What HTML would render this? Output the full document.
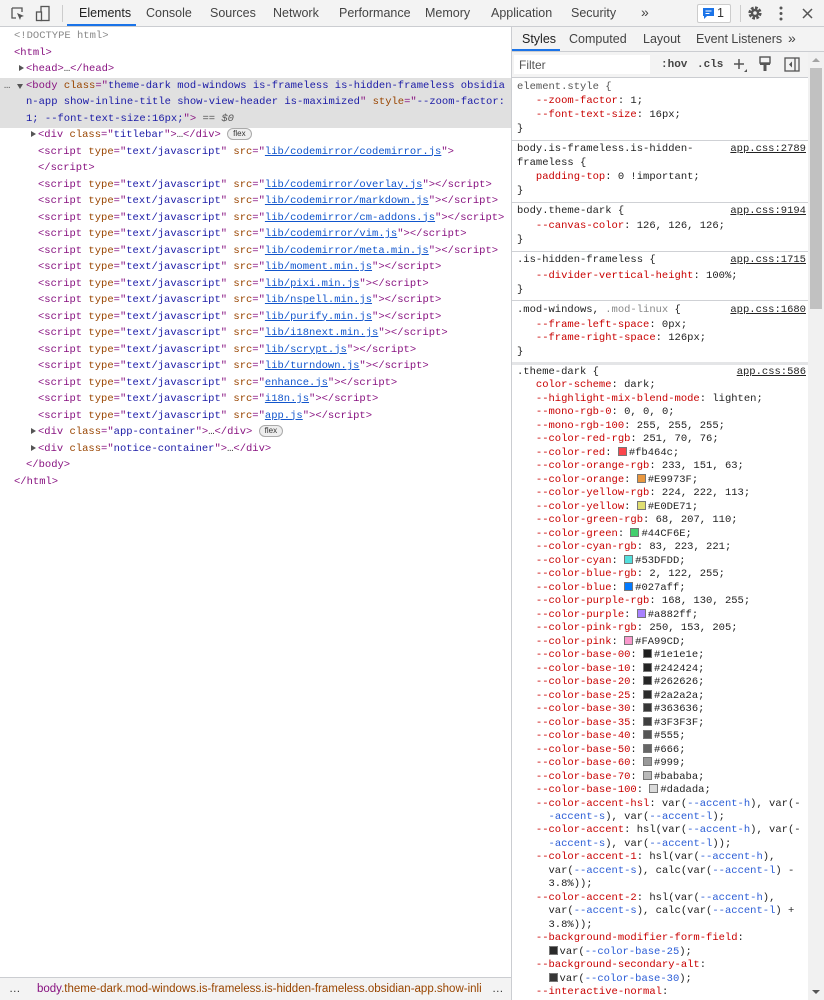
<!DOCTYPE html>
<html style="overflow:hidden"><head><meta charset="utf-8"><style>
*{box-sizing:border-box;margin:0;padding:0}
html,body{overflow:hidden}
body{width:824px;height:1000px;background:#fff;position:relative;font-family:"Liberation Sans",sans-serif;font-size:12px;color:#333}
.top{position:absolute;left:0;top:0;width:824px;height:27px;background:#f3f3f3;border-bottom:1px solid #cbcdd1}
.tab{position:absolute;top:6px;font-size:12.5px;color:#444;white-space:nowrap}
.mono{font-family:"Liberation Mono",monospace;font-size:10.5px;white-space:pre}
.row{position:absolute;height:16.5px;line-height:16.5px}
.t{color:#881280}.a{color:#994500}.v{color:#1a1aa6}.l{color:#1155cc;text-decoration:underline}.g{color:#888}
.tri{position:absolute;width:0;height:0;border-left:5px solid #555;border-top:3.5px solid transparent;border-bottom:3.5px solid transparent}
.trid{position:absolute;width:0;height:0;border-top:5px solid #555;border-left:3.5px solid transparent;border-right:3.5px solid transparent}
.flex{display:inline-block;font-family:"Liberation Sans",sans-serif;font-size:8px;line-height:10px;height:12px;padding:0 5px;border:1px solid #aaa;border-radius:6px;background:#eee;color:#333;vertical-align:1px}
.s{position:absolute;left:517px;height:14px;line-height:14px;color:#222}
.p{color:#c80000}.r{color:#222}.b{color:#2a5cd6}
.src{position:absolute;right:18px;text-decoration:underline;color:#222}
.sep{position:absolute;left:512px;width:296px;height:1px;background:#cfd1d5}
.sw{display:inline-block;width:9px;height:9px;border:1px solid #777;vertical-align:-1px;margin-right:2px}
</style></head><body>
<div class="top">
 <svg style="position:absolute;left:10px;top:6px" width="16" height="16" viewBox="0 0 16 16"><path d="M2 2h10v4M2 2v10h4" fill="none" stroke="#555" stroke-width="1.3"/><path d="M7 7l7 3-3 1-1 3z" fill="#555"/></svg>
 <svg style="position:absolute;left:35px;top:5px" width="16" height="17" viewBox="0 0 16 17"><rect x="6" y="1.5" width="8" height="14" fill="none" stroke="#555" stroke-width="1.3"/><rect x="1.5" y="7" width="5" height="8.5" fill="#f3f3f3" stroke="#555" stroke-width="1.3"/></svg>
 <div style="position:absolute;left:62px;top:5px;width:1px;height:17px;background:#ccc"></div>
 <div class="tab" style="left:79px;color:#222">Elements</div>
 <div style="position:absolute;left:67px;top:24px;width:69px;height:2px;background:#1a73e8"></div>
 <div class="tab" style="left:146px">Console</div>
 <div class="tab" style="left:210px">Sources</div>
 <div class="tab" style="left:273px">Network</div>
 <div class="tab" style="left:339px">Performance</div>
 <div class="tab" style="left:425px">Memory</div>
 <div class="tab" style="left:491px">Application</div>
 <div class="tab" style="left:571px">Security</div>
 <div class="tab" style="left:641px;top:4px;font-size:14px">»</div>
 <div style="position:absolute;left:697px;top:4px;width:34px;height:19px;border:1px solid #ccc;background:#fff;border-radius:2px"></div>
 <svg style="position:absolute;left:703px;top:8px" width="11" height="11" viewBox="0 0 11 11"><path d="M0 0h11v8H4l-3 3V8H0z" fill="#1a73e8"/><path d="M2.5 3h6M2.5 5.5h4" stroke="#fff" stroke-width="1"/></svg>
 <div class="tab" style="left:717px;color:#333">1</div>
 <div style="position:absolute;left:740px;top:5px;width:1px;height:17px;background:#ccc"></div>
 <svg style="position:absolute;left:747px;top:5px" width="16" height="16" viewBox="0 0 16 16"><circle cx="8" cy="8" r="5" fill="none" stroke="#555" stroke-width="3.2" stroke-dasharray="2.6 1.3"/><circle cx="8" cy="8" r="4.2" fill="#555"/><circle cx="8" cy="8" r="1.8" fill="#f3f3f3"/></svg>
 <svg style="position:absolute;left:779px;top:6px" width="4" height="15"><circle cx="2" cy="2" r="1.5" fill="#555"/><circle cx="2" cy="7.5" r="1.5" fill="#555"/><circle cx="2" cy="13" r="1.5" fill="#555"/></svg>
 <svg style="position:absolute;left:802px;top:8px" width="11" height="11"><path d="M1 1l9 9M10 1l-9 9" stroke="#555" stroke-width="1.5"/></svg>
</div>

<div class="mono">
<div class="row g" style="left:14px;top:28px">&lt;!DOCTYPE html&gt;</div>
<div class="row t" style="left:14px;top:44.5px">&lt;html&gt;</div>
<div class="tri" style="left:19px;top:65px"></div>
<div class="row t" style="left:26px;top:61px">&lt;head&gt;<span style="color:#333">…</span>&lt;/head&gt;</div>
<div style="position:absolute;left:0;top:78px;width:511px;height:50px;background:#e0e0e0"></div>
<div class="row" style="left:4px;top:77.5px;color:#555">…</div>
<div class="trid" style="left:17px;top:84px"></div>
<div class="row" style="left:26px;top:77.5px"><span class="t">&lt;body</span> <span class="a">class</span><span class="t">="</span><span class="v">theme-dark mod-windows is-frameless is-hidden-frameless obsidia</span></div>
<div class="row" style="left:26px;top:94px"><span class="v">n-app show-inline-title show-view-header is-maximized</span><span class="t">"</span> <span class="a">style</span><span class="t">="</span><span class="v">--zoom-factor:</span></div>
<div class="row" style="left:26px;top:110.5px"><span class="v">1; --font-text-size:16px;</span><span class="t">"&gt;</span> <span style="color:#555">== <i>$0</i></span></div>
<div class="tri" style="left:31px;top:131px"></div>
<div class="row" style="left:38px;top:127px"><span class="t">&lt;div</span> <span class="a">class</span><span class="t">="</span><span class="v">titlebar</span><span class="t">"&gt;</span>…<span class="t">&lt;/div&gt;</span> <span class="flex">flex</span></div>
<div class="row" style="left:38px;top:143.5px"><span class="t">&lt;script</span> <span class="a">type</span><span class="t">="</span><span class="v">text/javascript</span><span class="t">"</span> <span class="a">src</span><span class="t">="</span><span class="l">lib/codemirror/codemirror.js</span><span class="t">"&gt;</span></div>
<div class="row t" style="left:38px;top:160px">&lt;/script&gt;</div>
<div class="row" style="left:38px;top:176.5px"><span class="t">&lt;script</span> <span class="a">type</span><span class="t">="</span><span class="v">text/javascript</span><span class="t">"</span> <span class="a">src</span><span class="t">="</span><span class="l">lib/codemirror/overlay.js</span><span class="t">"&gt;&lt;/script&gt;</span></div>
<div class="row" style="left:38px;top:193px"><span class="t">&lt;script</span> <span class="a">type</span><span class="t">="</span><span class="v">text/javascript</span><span class="t">"</span> <span class="a">src</span><span class="t">="</span><span class="l">lib/codemirror/markdown.js</span><span class="t">"&gt;&lt;/script&gt;</span></div>
<div class="row" style="left:38px;top:209.5px"><span class="t">&lt;script</span> <span class="a">type</span><span class="t">="</span><span class="v">text/javascript</span><span class="t">"</span> <span class="a">src</span><span class="t">="</span><span class="l">lib/codemirror/cm-addons.js</span><span class="t">"&gt;&lt;/script&gt;</span></div>
<div class="row" style="left:38px;top:226px"><span class="t">&lt;script</span> <span class="a">type</span><span class="t">="</span><span class="v">text/javascript</span><span class="t">"</span> <span class="a">src</span><span class="t">="</span><span class="l">lib/codemirror/vim.js</span><span class="t">"&gt;&lt;/script&gt;</span></div>
<div class="row" style="left:38px;top:242.5px"><span class="t">&lt;script</span> <span class="a">type</span><span class="t">="</span><span class="v">text/javascript</span><span class="t">"</span> <span class="a">src</span><span class="t">="</span><span class="l">lib/codemirror/meta.min.js</span><span class="t">"&gt;&lt;/script&gt;</span></div>
<div class="row" style="left:38px;top:259px"><span class="t">&lt;script</span> <span class="a">type</span><span class="t">="</span><span class="v">text/javascript</span><span class="t">"</span> <span class="a">src</span><span class="t">="</span><span class="l">lib/moment.min.js</span><span class="t">"&gt;&lt;/script&gt;</span></div>
<div class="row" style="left:38px;top:275.5px"><span class="t">&lt;script</span> <span class="a">type</span><span class="t">="</span><span class="v">text/javascript</span><span class="t">"</span> <span class="a">src</span><span class="t">="</span><span class="l">lib/pixi.min.js</span><span class="t">"&gt;&lt;/script&gt;</span></div>
<div class="row" style="left:38px;top:292px"><span class="t">&lt;script</span> <span class="a">type</span><span class="t">="</span><span class="v">text/javascript</span><span class="t">"</span> <span class="a">src</span><span class="t">="</span><span class="l">lib/nspell.min.js</span><span class="t">"&gt;&lt;/script&gt;</span></div>
<div class="row" style="left:38px;top:308.5px"><span class="t">&lt;script</span> <span class="a">type</span><span class="t">="</span><span class="v">text/javascript</span><span class="t">"</span> <span class="a">src</span><span class="t">="</span><span class="l">lib/purify.min.js</span><span class="t">"&gt;&lt;/script&gt;</span></div>
<div class="row" style="left:38px;top:325px"><span class="t">&lt;script</span> <span class="a">type</span><span class="t">="</span><span class="v">text/javascript</span><span class="t">"</span> <span class="a">src</span><span class="t">="</span><span class="l">lib/i18next.min.js</span><span class="t">"&gt;&lt;/script&gt;</span></div>
<div class="row" style="left:38px;top:341.5px"><span class="t">&lt;script</span> <span class="a">type</span><span class="t">="</span><span class="v">text/javascript</span><span class="t">"</span> <span class="a">src</span><span class="t">="</span><span class="l">lib/scrypt.js</span><span class="t">"&gt;&lt;/script&gt;</span></div>
<div class="row" style="left:38px;top:358px"><span class="t">&lt;script</span> <span class="a">type</span><span class="t">="</span><span class="v">text/javascript</span><span class="t">"</span> <span class="a">src</span><span class="t">="</span><span class="l">lib/turndown.js</span><span class="t">"&gt;&lt;/script&gt;</span></div>
<div class="row" style="left:38px;top:374.5px"><span class="t">&lt;script</span> <span class="a">type</span><span class="t">="</span><span class="v">text/javascript</span><span class="t">"</span> <span class="a">src</span><span class="t">="</span><span class="l">enhance.js</span><span class="t">"&gt;&lt;/script&gt;</span></div>
<div class="row" style="left:38px;top:391px"><span class="t">&lt;script</span> <span class="a">type</span><span class="t">="</span><span class="v">text/javascript</span><span class="t">"</span> <span class="a">src</span><span class="t">="</span><span class="l">i18n.js</span><span class="t">"&gt;&lt;/script&gt;</span></div>
<div class="row" style="left:38px;top:407.5px"><span class="t">&lt;script</span> <span class="a">type</span><span class="t">="</span><span class="v">text/javascript</span><span class="t">"</span> <span class="a">src</span><span class="t">="</span><span class="l">app.js</span><span class="t">"&gt;&lt;/script&gt;</span></div>
<div class="tri" style="left:31px;top:428px"></div>
<div class="row" style="left:38px;top:424px"><span class="t">&lt;div</span> <span class="a">class</span><span class="t">="</span><span class="v">app-container</span><span class="t">"&gt;</span>…<span class="t">&lt;/div&gt;</span> <span class="flex">flex</span></div>
<div class="tri" style="left:31px;top:445px"></div>
<div class="row" style="left:38px;top:440.5px"><span class="t">&lt;div</span> <span class="a">class</span><span class="t">="</span><span class="v">notice-container</span><span class="t">"&gt;</span>…<span class="t">&lt;/div&gt;</span></div>
<div class="row t" style="left:26px;top:457px">&lt;/body&gt;</div>
<div class="row t" style="left:14px;top:473.5px">&lt;/html&gt;</div>
</div>

<div style="position:absolute;left:0;top:977px;width:512px;height:23px;background:#f3f3f3;border-top:1px solid #cbcdd1;font-size:11.5px;line-height:22px;white-space:nowrap;overflow:hidden">
 <span style="position:absolute;left:9px;color:#333">…</span>
 <span style="position:absolute;left:37px"><span style="color:#881280">body</span><span style="color:#994500">.theme-dark.mod-windows.is-frameless.is-hidden-frameless.obsidian-app.show-inli</span></span>
 <span style="position:absolute;left:492px;color:#333;background:#f3f3f3">…</span>
</div>

<div style="position:absolute;left:511px;top:27px;width:1px;height:973px;background:#cbcdd1"></div>

<div style="position:absolute;left:512px;top:27px;width:312px;height:25px;background:#f3f3f3;border-bottom:1px solid #cbcdd1"></div>
<div class="tab" style="left:522px;top:32px;color:#222">Styles</div>
<div style="position:absolute;left:512px;top:49px;width:48px;height:2px;background:#1a73e8"></div>
<div class="tab" style="left:569px;top:32px">Computed</div>
<div class="tab" style="left:643px;top:32px">Layout</div>
<div class="tab" style="left:696px;top:32px">Event Listeners</div>
<div class="tab" style="left:788px;top:30px;font-size:14px">»</div>

<div style="position:absolute;left:512px;top:52px;width:296px;height:26px;background:#f3f3f3;border-bottom:1px solid #cbcdd1"></div>
<div style="position:absolute;left:514px;top:55px;width:136px;height:19px;background:#fff"></div>
<div class="tab" style="left:519px;top:58px;font-size:12px;color:#555">Filter</div>
<div class="tab mono" style="left:661px;top:59px;font-size:11px;font-weight:bold;color:#444">:hov</div>
<div class="tab mono" style="left:697px;top:59px;font-size:11px;font-weight:bold;color:#444">.cls</div>
<svg style="position:absolute;left:732px;top:57px" width="16" height="16"><path d="M7 2v10M2 7h10" stroke="#555" stroke-width="1.5"/><path d="M15 12v3h-3z" fill="#555"/></svg>
<svg style="position:absolute;left:758px;top:56px" width="14" height="16"><rect x="2" y="1" width="10" height="6" fill="none" stroke="#555" stroke-width="1.4"/><rect x="2" y="7" width="10" height="2" fill="#555"/><rect x="5.5" y="9" width="3" height="6" fill="#555"/></svg>
<svg style="position:absolute;left:784px;top:57px" width="16" height="15"><rect x="1" y="1" width="14" height="13" fill="none" stroke="#555" stroke-width="1.3"/><path d="M11 1v13" stroke="#555" stroke-width="1.3"/><path d="M8 4.5v6l-3-3z" fill="#555"/></svg>

<div style="position:absolute;left:808px;top:52px;width:16px;height:948px;background:#f1f1f1"></div>
<div style="position:absolute;left:810px;top:68px;width:12px;height:241px;background:#c1c1c1"></div>
<svg style="position:absolute;left:811px;top:57px" width="10" height="6"><path d="M1 5l4-4 4 4z" fill="#a3a3a3"/></svg>
<svg style="position:absolute;left:811px;top:989px" width="10" height="6"><path d="M1 1l4 4 4-4z" fill="#555"/></svg>

<div class="mono">
<div class="s g" style="top:80px;color:#555">element.style {</div>
<div class="s" style="top:94px">   <span class="p">--zoom-factor</span>: 1;</div>
<div class="s" style="top:108px">   <span class="p">--font-text-size</span>: 16px;</div>
<div class="s" style="top:122px">}</div>
<div class="sep" style="top:140px"></div>
<div class="s" style="top:142px">body.is-frameless.is-hidden-</div><div class="s src" style="top:142px;left:auto">app.css:2789</div>
<div class="s" style="top:156px">frameless {</div>
<div class="s" style="top:170px">   <span class="p">padding-top</span>: 0 !important;</div>
<div class="s" style="top:184px">}</div>
<div class="sep" style="top:202px"></div>
<div class="s" style="top:204px">body.theme-dark {</div><div class="s src" style="top:204px;left:auto">app.css:9194</div>
<div class="s" style="top:219px">   <span class="p">--canvas-color</span>: 126, 126, 126;</div>
<div class="s" style="top:233px">}</div>
<div class="sep" style="top:251px"></div>
<div class="s" style="top:253px">.is-hidden-frameless {</div><div class="s src" style="top:253px;left:auto">app.css:1715</div>
<div class="s" style="top:269px">   <span class="p">--divider-vertical-height</span>: 100%;</div>
<div class="s" style="top:283px">}</div>
<div class="sep" style="top:300px"></div>
<div class="s" style="top:303px">.mod-windows, <span style="color:#888">.mod-linux</span> {</div><div class="s src" style="top:303px;left:auto">app.css:1680</div>
<div class="s" style="top:318px">   <span class="p">--frame-left-space</span>: 0px;</div>
<div class="s" style="top:331px">   <span class="p">--frame-right-space</span>: 126px;</div>
<div class="s" style="top:345px">}</div>
<div class="sep" style="top:362px;height:3px;background:#e4e5e7"></div>
<div class="s src" style="top:366px;left:auto;height:13.5px;line-height:13.5px">app.css:586</div>
<div style="position:absolute;left:517px;top:366px;line-height:13.48px;color:#222">.theme-dark {
   <span class="p">color-scheme</span>: dark;
   <span class="p">--highlight-mix-blend-mode</span>: lighten;
   <span class="p">--mono-rgb-0</span>: 0, 0, 0;
   <span class="p">--mono-rgb-100</span>: 255, 255, 255;
   <span class="p">--color-red-rgb</span>: 251, 70, 76;
   <span class="p">--color-red</span>: <span class="sw" style="background:#fb464c"></span>#fb464c;
   <span class="p">--color-orange-rgb</span>: 233, 151, 63;
   <span class="p">--color-orange</span>: <span class="sw" style="background:#E9973F"></span>#E9973F;
   <span class="p">--color-yellow-rgb</span>: 224, 222, 113;
   <span class="p">--color-yellow</span>: <span class="sw" style="background:#E0DE71"></span>#E0DE71;
   <span class="p">--color-green-rgb</span>: 68, 207, 110;
   <span class="p">--color-green</span>: <span class="sw" style="background:#44CF6E"></span>#44CF6E;
   <span class="p">--color-cyan-rgb</span>: 83, 223, 221;
   <span class="p">--color-cyan</span>: <span class="sw" style="background:#53DFDD"></span>#53DFDD;
   <span class="p">--color-blue-rgb</span>: 2, 122, 255;
   <span class="p">--color-blue</span>: <span class="sw" style="background:#027aff"></span>#027aff;
   <span class="p">--color-purple-rgb</span>: 168, 130, 255;
   <span class="p">--color-purple</span>: <span class="sw" style="background:#a882ff"></span>#a882ff;
   <span class="p">--color-pink-rgb</span>: 250, 153, 205;
   <span class="p">--color-pink</span>: <span class="sw" style="background:#FA99CD"></span>#FA99CD;
   <span class="p">--color-base-00</span>: <span class="sw" style="background:#1e1e1e"></span>#1e1e1e;
   <span class="p">--color-base-10</span>: <span class="sw" style="background:#242424"></span>#242424;
   <span class="p">--color-base-20</span>: <span class="sw" style="background:#262626"></span>#262626;
   <span class="p">--color-base-25</span>: <span class="sw" style="background:#2a2a2a"></span>#2a2a2a;
   <span class="p">--color-base-30</span>: <span class="sw" style="background:#363636"></span>#363636;
   <span class="p">--color-base-35</span>: <span class="sw" style="background:#3F3F3F"></span>#3F3F3F;
   <span class="p">--color-base-40</span>: <span class="sw" style="background:#555"></span>#555;
   <span class="p">--color-base-50</span>: <span class="sw" style="background:#666"></span>#666;
   <span class="p">--color-base-60</span>: <span class="sw" style="background:#999"></span>#999;
   <span class="p">--color-base-70</span>: <span class="sw" style="background:#bababa"></span>#bababa;
   <span class="p">--color-base-100</span>: <span class="sw" style="background:#dadada"></span>#dadada;
   <span class="p">--color-accent-hsl</span>: var(<span class="b">--accent-h</span>), var(-
     <span class="b">-accent-s</span>), var(<span class="b">--accent-l</span>);
   <span class="p">--color-accent</span>: hsl(var(<span class="b">--accent-h</span>), var(-
     <span class="b">-accent-s</span>), var(<span class="b">--accent-l</span>));
   <span class="p">--color-accent-1</span>: hsl(var(<span class="b">--accent-h</span>),
     var(<span class="b">--accent-s</span>), calc(var(<span class="b">--accent-l</span>) -
     3.8%));
   <span class="p">--color-accent-2</span>: hsl(var(<span class="b">--accent-h</span>),
     var(<span class="b">--accent-s</span>), calc(var(<span class="b">--accent-l</span>) +
     3.8%));
   <span class="p">--background-modifier-form-field</span>:
     <span class="sw" style="background:#2a2a2a"></span>var(<span class="b">--color-base-25</span>);
   <span class="p">--background-secondary-alt</span>:
     <span class="sw" style="background:#363636"></span>var(<span class="b">--color-base-30</span>);
   <span class="p">--interactive-normal</span>:</div>
</div>
</body></html>
